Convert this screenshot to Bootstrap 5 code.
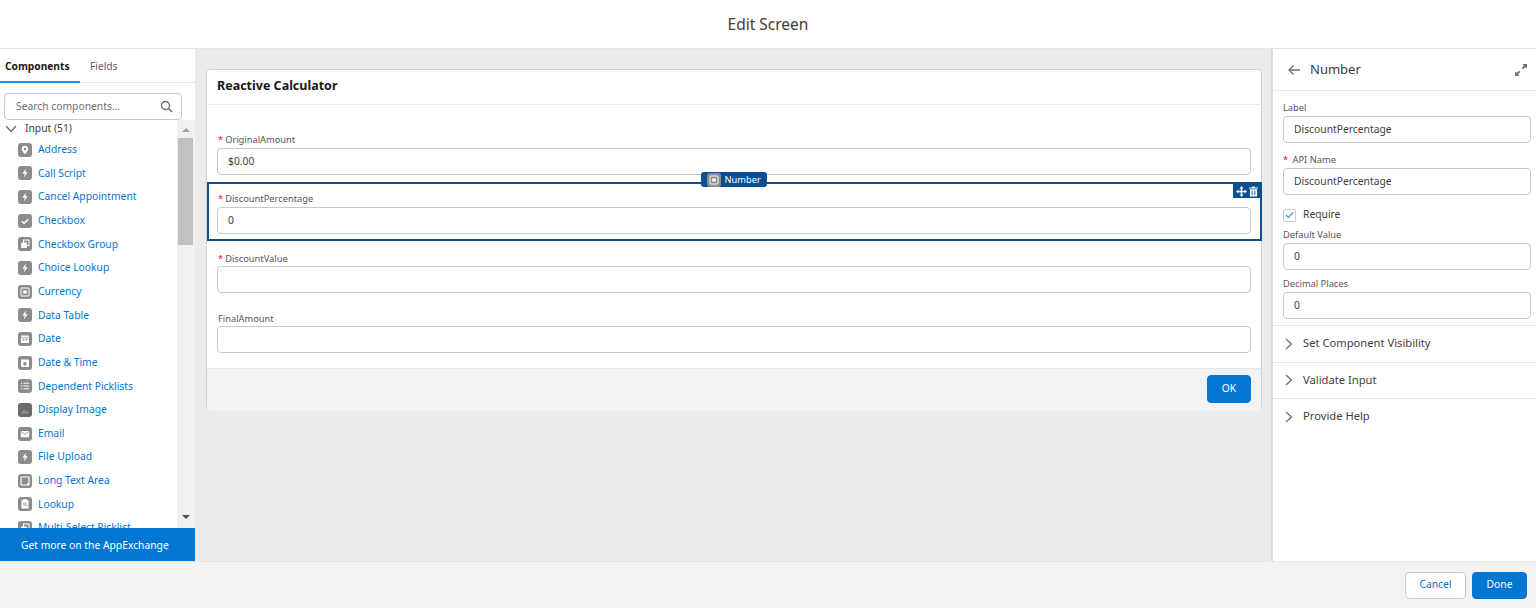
<!DOCTYPE html>
<html lang="en">
<head>
<meta charset="utf-8">
<title>Edit Screen</title>
<link rel="stylesheet" href="https://cdn.jsdelivr.net/npm/bootstrap@5.3.0/dist/css/bootstrap.min.css">
<style>
html,body{height:100%;overflow:hidden}
body{font-family:"Noto Sans","Open Sans","Liberation Sans",sans-serif;font-size:11px;color:#3e3e3c;background:#f3f3f3}
.shell{height:608px}
.top-title{height:49px;padding-top:2px;background:#fff;border-bottom:1px solid #e5e5e5;font-size:15.5px;color:#3e3e3c}
.main-row{height:512px}
.left-pane{width:195px;background:#fff}
.tabs-row{height:34px;border-bottom:1px solid #e5e5e5;font-size:10.2px}
.tab-on{width:80px;padding:10px 0 0 5px;font-weight:700;color:#181818;border-bottom:2px solid #1b96ff;height:34px}
.tab-off{padding:10px 0 0 10px;color:#5c5c5c}
.search-wrap{padding:10px 13px 0 4px}
.search-box{height:27px;border:1px solid #c9c9c9;border-radius:4px;padding:0 8px 0 11px;color:#706e6b;font-size:10.3px}
.list-area{height:408px;overflow:hidden}
.comp-list{width:177px}
.group-head{height:17px;padding:1px 0 0 5px;font-size:10.3px;color:#3e3e3c;gap:8px}
.comp-item{height:23.65px;padding-left:18px;gap:6px;color:#0176d3;font-size:10.3px}
.first-item{margin-top:1px}
.comp-ico{width:14px;height:14px;flex:none}
.sbar{width:18px;background:#f1f1f1;position:relative}
.sbar-thumb{position:absolute;left:1px;right:2px;top:18px;height:107px;background:#c1c1c1}
.sbar-up,.sbar-down{position:absolute;left:5px;width:0;height:0;border-left:4px solid transparent;border-right:4px solid transparent}
.sbar-up{top:8px;border-bottom:4px solid #a3a3a3}
.sbar-down{bottom:9px;border-top:4px solid #505050}
.more-bar{height:33px;padding:2px 0 0 21px;background:#0176d3;color:#fff;font-size:10.3px}
.canvas-pane{width:1078px;background:#ecebea;padding:20px 9px 0 11px;border-right:2px solid #dcdcdc;flex:none}
.screen-card{height:342px;background:#fff;border:1px solid #d3d3d3;border-radius:4px;overflow:visible}
.screen-head{height:35px;padding:0 0 2px 10px;font-size:12.5px;font-weight:700;color:#181818;border-bottom:1px solid #ececec}
.screen-body{height:263px;position:relative}
.fld{padding:11px 10px 0;height:59.6px}
.fld-first{padding-top:28px;height:77px}
.fld-sel{border:2px solid #0b4f8f;height:59px;margin-right:-1px;padding:8px 9px 0 8px;position:relative}
.fld-label{display:block;padding-left:1px;font-size:9.3px;line-height:13px;color:#54565a;margin-bottom:2px}
.fld-label-tight{margin-bottom:1px}
.req{color:#ea001e;margin-right:2px}
.fld-input{height:27px;border:1px solid #c9c9c9;border-radius:4px;padding:0 10px;font-size:10.3px;color:#3e3e3c;display:flex;align-items:center;background:#fff}
.sel-tag{position:absolute;top:-12px;left:50%;transform:translateX(-50%);margin-left:-1px;height:15px;width:66px;background:#0b4f8f;border-radius:3px;color:#fff;font-size:9.3px;gap:4px;padding-left:6px}
.sel-tools{position:absolute;top:0;right:0;width:27px;height:14px;background:#0b4f8f;gap:2px;padding-left:3px}
.screen-foot{height:43px;padding:0 10px 2px 0;background:#f3f2f2;border-top:1px solid #e4e4e4;border-radius:0 0 4px 4px}
.btn-sf{background:#0176d3;border:1px solid #0176d3;color:#fff;font-size:10.3px;border-radius:4px;height:27px;padding:0;display:flex;align-items:center;justify-content:center}
.btn-ok{width:44px;height:28px}
.right-pane{flex:1;background:#fff}
.prop-head{height:42px;padding:1px 9px 0 14px;border-bottom:1px solid #e8e8e8;font-size:13px;color:#3e3e3c;gap:9px}
.prop-form{padding:10px 5px 0 10px}
.prop-label{display:block;font-size:9.3px;line-height:13px;color:#54565a;margin-bottom:2px}
.prop-field{margin-bottom:10px}
.prop-field-api{margin-bottom:9px}
.prop-field-tight{margin-bottom:7px}
.prop-input{height:27px;border:1px solid #c9c9c9;border-radius:4px;padding:0 10px;font-size:10.3px;color:#3e3e3c;display:flex;align-items:center}
.req-row{height:16px;gap:7px;font-size:10.3px;margin:12px 0 5px}
.chk{width:13px;height:13px;border:1px solid #c9c9c9;border-radius:2px;flex:none}
.acc-row{height:36.5px;border-top:1px solid #e5e5e5;padding-left:12px;gap:10px;font-size:11.2px;color:#3e3e3c}
.acc-first{margin-top:6px}
.bottom-bar{height:47px;background:#f3f3f3;border-top:1px solid #e5e5e5;padding-right:9px;gap:6px}
.btn-cancel{width:61px;background:#fff;border:1px solid #c9c9c9;color:#0176d3;font-size:10.3px;border-radius:4px;height:27px;padding:0}
.btn-done{width:55px}
</style>
</head>
<body>
<svg width="0" height="0" class="d-none">
<defs>
<symbol id="i-bolt" viewBox="0 0 14 14"><rect width="14" height="14" rx="3" fill="#8c8c8c"/><path d="M8 2.600 4.400 7.600h2.300L5.900 11.400 9.700 6.300H7.300z" fill="#fff"/></symbol>
<symbol id="i-pin" viewBox="0 0 14 14"><rect width="14" height="14" rx="3" fill="#8c8c8c"/><path d="M7 2.800a3.200 3.200 0 0 0-3.200 3.200C3.800 8.200 7 11.200 7 11.200S10.200 8.200 10.200 6A3.200 3.200 0 0 0 7 2.800z" fill="#fff"/><circle cx="7" cy="6" r="1.200" fill="#8c8c8c"/></symbol>
<symbol id="i-check" viewBox="0 0 14 14"><rect width="14" height="14" rx="3" fill="#8c8c8c"/><path d="M3.800 7.200 6 9.200l4.200-4" fill="none" stroke="#fff" stroke-width="1.400"/></symbol>
<symbol id="i-group" viewBox="0 0 14 14"><rect width="14" height="14" rx="3" fill="#8c8c8c"/><rect x="5.500" y="3" width="5.500" height="5.500" fill="none" stroke="#fff"/><rect x="3.300" y="5.500" width="5.500" height="5.500" fill="#fff"/></symbol>
<symbol id="i-box" viewBox="0 0 14 14"><rect width="14" height="14" rx="3" fill="#8c8c8c"/><rect x="3" y="3" width="8" height="8" rx=".6" fill="none" stroke="#fff"/><rect x="5.200" y="5.500" width="3.600" height="3" fill="#fff"/></symbol>
<symbol id="i-date" viewBox="0 0 14 14"><rect width="14" height="14" rx="3" fill="#8c8c8c"/><rect x="3" y="3.500" width="8" height="7.500" rx=".6" fill="#fff"/><path d="M3 5.800h8" stroke="#8c8c8c" stroke-width=".8"/><rect x="5" y="7" width="1.500" height="1.500" fill="#8c8c8c"/><rect x="7.800" y="7" width="1.500" height="1.500" fill="#8c8c8c"/></symbol>
<symbol id="i-datetime" viewBox="0 0 14 14"><rect width="14" height="14" rx="3" fill="#8c8c8c"/><rect x="3" y="3.500" width="8" height="7.500" rx=".6" fill="#fff"/><circle cx="7" cy="7.800" r="1.800" fill="#8c8c8c"/></symbol>
<symbol id="i-lines" viewBox="0 0 14 14"><rect width="14" height="14" rx="3" fill="#8c8c8c"/><path d="M5.500 4.200h5.500M5.500 7h5.500M5.500 9.800h5.500M3 4.200h1.300M3 7h1.300M3 9.800h1.300" stroke="#fff"/></symbol>
<symbol id="i-image" viewBox="0 0 14 14"><rect width="14" height="14" rx="3" fill="#6b6b6b"/><path d="M3 10.500 6 6.500l2 2.500 1.500-1.500 1.500 3z" fill="#8f8f8f"/></symbol>
<symbol id="i-mail" viewBox="0 0 14 14"><rect width="14" height="14" rx="3" fill="#8c8c8c"/><rect x="2.800" y="4" width="8.400" height="6.200" rx=".5" fill="#fff"/><path d="M3 4.500 7 7.500l4-3" fill="none" stroke="#8c8c8c" stroke-width=".8"/></symbol>
<symbol id="i-text" viewBox="0 0 14 14"><rect width="14" height="14" rx="3" fill="#8c8c8c"/><rect x="3" y="3" width="8" height="8" rx=".6" fill="none" stroke="#fff" stroke-width="1.200"/><path d="M9 11 11 9H9z" fill="#fff"/></symbol>
<symbol id="i-lookup" viewBox="0 0 14 14"><rect width="14" height="14" rx="3" fill="#8c8c8c"/><rect x="3.500" y="3" width="7" height="8.500" rx=".6" fill="#fff"/><rect x="5.300" y="2.200" width="3.400" height="1.600" fill="#fff"/><circle cx="6.800" cy="7" r="1.300" fill="none" stroke="#8c8c8c" stroke-width=".8"/><path d="M7.800 8 9 9.400" stroke="#8c8c8c" stroke-width=".8"/></symbol>
</defs>
</svg>

<div class="shell d-flex flex-column">
  <header class="top-title d-flex align-items-center justify-content-center">Edit Screen</header>

  <div class="main-row d-flex">
    <aside class="left-pane d-flex flex-column flex-shrink-0">
      <div class="tabs-row d-flex">
        <div class="tab-on">Components</div>
        <div class="tab-off">Fields</div>
      </div>
      <div class="search-wrap">
        <div class="search-box d-flex align-items-center justify-content-between">
          <span>Search components...</span>
          <svg width="13" height="13" viewBox="0 0 13 13"><circle cx="5.500" cy="5.500" r="4" fill="none" stroke="#706e6b" stroke-width="1.300"/><path d="m8.500 8.500 3.500 3.500" stroke="#706e6b" stroke-width="1.600"/></svg>
        </div>
      </div>
      <div class="list-area d-flex">
        <div class="comp-list">
          <div class="group-head d-flex align-items-center">
            <svg width="12" height="8" viewBox="0 0 12 8"><path d="m1 1 5 5.500L11 1" fill="none" stroke="#706e6b" stroke-width="1.300"/></svg>
            <span>Input (51)</span>
          </div>
          <div class="comp-item first-item d-flex align-items-center"><svg class="comp-ico"><use href="#i-pin"/></svg>Address</div>
          <div class="comp-item d-flex align-items-center"><svg class="comp-ico"><use href="#i-bolt"/></svg>Call Script</div>
          <div class="comp-item d-flex align-items-center"><svg class="comp-ico"><use href="#i-bolt"/></svg>Cancel Appointment</div>
          <div class="comp-item d-flex align-items-center"><svg class="comp-ico"><use href="#i-check"/></svg>Checkbox</div>
          <div class="comp-item d-flex align-items-center"><svg class="comp-ico"><use href="#i-group"/></svg>Checkbox Group</div>
          <div class="comp-item d-flex align-items-center"><svg class="comp-ico"><use href="#i-bolt"/></svg>Choice Lookup</div>
          <div class="comp-item d-flex align-items-center"><svg class="comp-ico"><use href="#i-box"/></svg>Currency</div>
          <div class="comp-item d-flex align-items-center"><svg class="comp-ico"><use href="#i-bolt"/></svg>Data Table</div>
          <div class="comp-item d-flex align-items-center"><svg class="comp-ico"><use href="#i-date"/></svg>Date</div>
          <div class="comp-item d-flex align-items-center"><svg class="comp-ico"><use href="#i-datetime"/></svg>Date &amp; Time</div>
          <div class="comp-item d-flex align-items-center"><svg class="comp-ico"><use href="#i-lines"/></svg>Dependent Picklists</div>
          <div class="comp-item d-flex align-items-center"><svg class="comp-ico"><use href="#i-image"/></svg>Display Image</div>
          <div class="comp-item d-flex align-items-center"><svg class="comp-ico"><use href="#i-mail"/></svg>Email</div>
          <div class="comp-item d-flex align-items-center"><svg class="comp-ico"><use href="#i-bolt"/></svg>File Upload</div>
          <div class="comp-item d-flex align-items-center"><svg class="comp-ico"><use href="#i-text"/></svg>Long Text Area</div>
          <div class="comp-item d-flex align-items-center"><svg class="comp-ico"><use href="#i-lookup"/></svg>Lookup</div>
          <div class="comp-item d-flex align-items-center"><svg class="comp-ico"><use href="#i-group"/></svg>Multi-Select Picklist</div>
        </div>
        <div class="sbar"><span class="sbar-thumb"></span><span class="sbar-up"></span><span class="sbar-down"></span></div>
      </div>
      <div class="more-bar d-flex align-items-center">Get more on the AppExchange</div>
    </aside>

    <main class="canvas-pane">
      <div class="screen-card">
        <div class="screen-head d-flex align-items-center">Reactive Calculator</div>
        <div class="screen-body">
          <div class="fld fld-first">
            <span class="fld-label"><span class="req">*</span>OriginalAmount</span>
            <div class="fld-input">$0.00</div>
          </div>
          <div class="fld-sel">
            <div class="sel-tag d-flex align-items-center">
              <svg width="14" height="14"><use href="#i-box"/></svg><span>Number</span>
            </div>
            <div class="sel-tools d-flex align-items-center">
              <svg width="11" height="11" viewBox="0 0 11 11"><path d="M5.500 0 7.500 2.400H6.200V4.800H8.600V3.500L11 5.500 8.600 7.500V6.200H6.200V8.600H7.500L5.500 11 3.500 8.600H4.800V6.200H2.400V7.500L0 5.500 2.400 3.500V4.800H4.800V2.400H3.500z" fill="#fff"/></svg>
              <svg width="9" height="11" viewBox="0 0 10 11"><path d="M3.500 0h3v1H10v1.200H0V1h3.500zM1 3h8v8H1z" fill="#fff"/><path d="M3.500 4.500v5M6.500 4.500v5" stroke="#0b4f8f"/></svg>
            </div>
            <span class="fld-label"><span class="req">*</span>DiscountPercentage</span>
            <div class="fld-input">0</div>
          </div>
          <div class="fld">
            <span class="fld-label fld-label-tight"><span class="req">*</span>DiscountValue</span>
            <div class="fld-input"></div>
          </div>
          <div class="fld">
            <span class="fld-label fld-label-tight">FinalAmount</span>
            <div class="fld-input"></div>
          </div>
        </div>
        <div class="screen-foot d-flex align-items-center justify-content-end">
          <button type="button" class="btn btn-sf btn-ok">OK</button>
        </div>
      </div>
    </main>

    <aside class="right-pane">
      <div class="prop-head d-flex align-items-center">
        <svg width="14" height="12" viewBox="0 0 14 12"><path d="M13 6H2M6.500 1.500 2 6l4.500 4.500" fill="none" stroke="#706e6b" stroke-width="1.300"/></svg>
        <span class="flex-grow-1">Number</span>
        <svg width="12" height="12" viewBox="0 0 12 12"><path d="M12 0H7.500l1.600 1.600L6.800 3.900l1.300 1.300 2.300-2.300L12 4.500zM0 12h4.500l-1.600-1.600 2.300-2.300-1.300-1.300-2.300 2.300L0 7.500z" fill="#706e6b"/></svg>
      </div>
      <div class="prop-form">
        <div class="prop-field">
          <span class="prop-label">Label</span>
          <div class="prop-input">DiscountPercentage</div>
        </div>
        <div>
          <span class="prop-label"><span class="req">*</span> API Name</span>
          <div class="prop-input">DiscountPercentage</div>
        </div>
        <div class="req-row d-flex align-items-center">
          <span class="chk d-flex align-items-center justify-content-center">
            <svg width="9" height="8" viewBox="0 0 9 8"><path d="m1 4 2.500 2.500L8 1.500" fill="none" stroke="#3b97de" stroke-width="1.200"/></svg>
          </span>
          <span>Require</span>
        </div>
        <div class="prop-field-tight">
          <span class="prop-label">Default Value</span>
          <div class="prop-input">0</div>
        </div>
        <div>
          <span class="prop-label">Decimal Places</span>
          <div class="prop-input">0</div>
        </div>
      </div>
      <div class="acc-row acc-first d-flex align-items-center">
        <svg width="8" height="12" viewBox="0 0 8 12"><path d="m1 1 5.500 5L1 11" fill="none" stroke="#706e6b" stroke-width="1.300"/></svg>
        <span>Set Component Visibility</span>
      </div>
      <div class="acc-row d-flex align-items-center">
        <svg width="8" height="12" viewBox="0 0 8 12"><path d="m1 1 5.500 5L1 11" fill="none" stroke="#706e6b" stroke-width="1.300"/></svg>
        <span>Validate Input</span>
      </div>
      <div class="acc-row d-flex align-items-center">
        <svg width="8" height="12" viewBox="0 0 8 12"><path d="m1 1 5.500 5L1 11" fill="none" stroke="#706e6b" stroke-width="1.300"/></svg>
        <span>Provide Help</span>
      </div>
    </aside>
  </div>

  <footer class="bottom-bar d-flex align-items-center justify-content-end">
    <button type="button" class="btn btn-cancel">Cancel</button>
    <button type="button" class="btn btn-sf btn-done">Done</button>
  </footer>
</div>
<script src="https://cdn.jsdelivr.net/npm/bootstrap@5.3.0/dist/js/bootstrap.bundle.min.js"></script>
</body>
</html>
